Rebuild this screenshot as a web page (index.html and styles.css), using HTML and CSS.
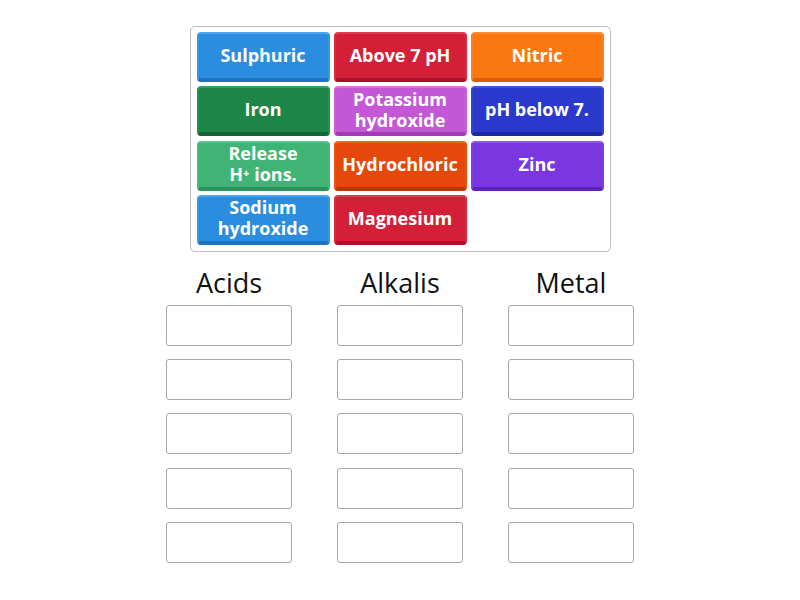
FILE: index.html
```html
<!DOCTYPE html>
<html>
<head>
<meta charset="utf-8">
<link rel="stylesheet" href="styles.css">
</head>
<body>
<main class="page">
  <div class="board">
    <div class="tile blue"><span>Sulphuric</span></div>
    <div class="tile red"><span>Above 7 pH</span></div>
    <div class="tile orange"><span>Nitric</span></div>
    <div class="tile green"><span>Iron</span></div>
    <div class="tile violet"><span>Potassium hydroxide</span></div>
    <div class="tile navy"><span>pH below 7.</span></div>
    <div class="tile mint"><span class="lines"><span class="line">Release</span><span class="line">H⁺ ions.</span></span></div>
    <div class="tile vermilion"><span>Hydrochloric</span></div>
    <div class="tile purple"><span>Zinc</span></div>
    <div class="tile blue"><span>Sodium hydroxide</span></div>
    <div class="tile red"><span>Magnesium</span></div>
  </div>
  <div class="groups">
    <div class="group">
      <div class="heading">Acids</div>
      <div class="slot"></div><div class="slot"></div><div class="slot"></div><div class="slot"></div><div class="slot"></div>
    </div>
    <div class="group">
      <div class="heading">Alkalis</div>
      <div class="slot"></div><div class="slot"></div><div class="slot"></div><div class="slot"></div><div class="slot"></div>
    </div>
    <div class="group">
      <div class="heading">Metal</div>
      <div class="slot"></div><div class="slot"></div><div class="slot"></div><div class="slot"></div><div class="slot"></div>
    </div>
  </div>
</main>
</body>
</html>
```
FILE: styles.css
```css
* { box-sizing: border-box; }
html, body { margin: 0; padding: 0; background: #fff; }
body { font-family: "Open Sans", "Liberation Sans", sans-serif; width: 800px; height: 600px; overflow: hidden; }
.page { padding-top: 26px; display: flex; flex-direction: column; align-items: center; }
.board {
  width: 421px;
  border: 1px solid #bdbdbd;
  border-radius: 5px;
  padding: 5px 6px 6px 6px;
  display: grid;
  grid-template-columns: repeat(3, 133px);
  grid-auto-rows: 50px;
  column-gap: 4px;
  row-gap: 4.33px;
}
.tile {
  border-radius: 4px;
  color: #fff;
  font-weight: 700;
  font-size: 18px;
  line-height: 21px;
  text-align: center;
  display: flex;
  align-items: center;
  justify-content: center;
  padding: 0 4px 1px;
  border: 2px solid;
  border-bottom-width: 4px;
}
.lines { display: flex; flex-direction: column; align-items: center; }
.line { display: block; height: 21px; }
.blue { background: #2b8de0; border-color: #4ba6f2 #3399ea #1f72c0; }
.red { background: #d31f38; border-color: #e23a52 #da2a43 #a91329; }
.orange { background: #fb7811; border-color: #ff8c2e #fd8020 #d8600a; }
.green { background: #1d8547; border-color: #2ba55d #23904f #146536; }
.violet { background: #c457d6; border-color: #d273e2 #c95fdb #a13ab3; }
.navy { background: #2a39cc; border-color: #4451dd #3340d2 #1d28a3; }
.mint { background: #3fb474; border-color: #58c689 #46b97a #2b9359; }
.vermilion { background: #e6480c; border-color: #f4621f #ea5213 #bd3705; }
.purple { background: #7a36e0; border-color: #9055ec #7f3ee3 #5d20bd; }
.groups {
  margin-top: 14px;
  display: grid;
  grid-template-columns: repeat(3, 126px);
  column-gap: 45px;
}
.group { display: flex; flex-direction: column; align-items: stretch; }
.heading {
  font-size: 27px;
  line-height: 34px;
  text-align: center;
  color: #111;
  margin-bottom: 5px;
  white-space: nowrap;
}
.slot {
  height: 41px;
  border: 1px solid #a8a8a8;
  border-radius: 3px;
  margin-bottom: 13.25px;
}
```
